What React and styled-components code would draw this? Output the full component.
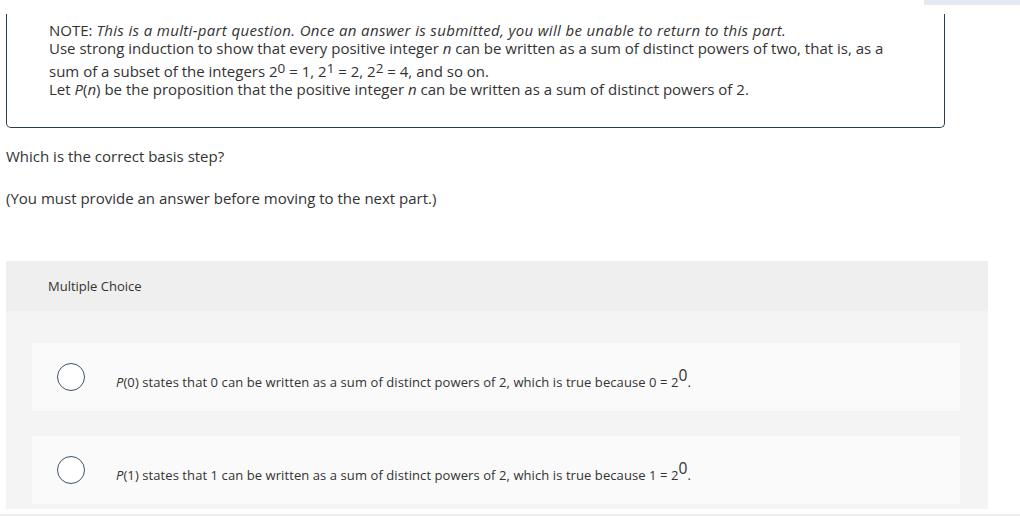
import styled, { createGlobalStyle } from "styled-components";

const GlobalStyle = createGlobalStyle`
  html, body {
    margin: 0;
    padding: 0;
    background: #ffffff;
  }
  body {
    font-family: "Open Sans", "Liberation Sans", Arial, sans-serif;
    color: #333333;
  }
`;

const Page = styled.div`
  width: 1020px;
  height: 516px;
  overflow: hidden;
  border-bottom: 2px solid #eeeeee;
  box-sizing: border-box;
`;

const TopStrip = styled.div`
  display: flex;
  justify-content: flex-end;
  height: 5px;
`;

const Tab = styled.div`
  width: 96px;
  height: 5px;
  background: #e4eaf2;
`;

const NoteCard = styled.div`
  margin: 9px 0 0 6px;
  width: 939px;
  box-sizing: border-box;
  border: 1.5px solid #2c3e4c;
  border-top: none;
  border-radius: 0 0 5px 5px;
  padding: 7px 0 29px 42px;
  font-size: 15px;
  line-height: 18px;
`;

const Line = styled.div`
  line-height: 18px;
  margin-top: ${p => (p.tall ? "5px" : "0")};
  white-space: nowrap;
`;

const Em = styled.i`
  letter-spacing: 0.35px;
`;

const Sup = styled.span`
  display: inline-block;
  line-height: 1;
  font-size: ${p => p.size || "1em"};
  vertical-align: ${p => p.lift || "4px"};
`;

const Question = styled.p`
  margin: ${p => p.top}px 0 0 6px;
  font-size: 15px;
  line-height: 18px;
`;

const ChoicePanel = styled.section`
  margin: 54px 0 0 6px;
  width: 982px;
  background: #f4f4f4;
  padding-bottom: 5px;
`;

const PanelHeader = styled.div`
  height: 50px;
  display: flex;
  align-items: center;
  padding-left: 42px;
  background: #efefef;
  font-size: 13px;
`;

const Options = styled.div`
  display: flex;
  flex-direction: column;
  gap: 25px;
  padding: 32px 28px 0 26px;
`;

const Option = styled.label`
  height: 68px;
  display: flex;
  align-items: center;
  background: #fafafa;
  padding-left: 25px;
  font-size: 13px;
  letter-spacing: 0.08px;
`;

const Radio = styled.span`
  width: 28px;
  height: 28px;
  box-sizing: border-box;
  border-radius: 50%;
  border: 1.5px solid #3b5266;
  background: #ffffff;
  flex-shrink: 0;
  margin-right: 31px;
`;

const OptionText = styled.span`
  padding-top: 4px;
`;

const choices = [
  { n: "0", lhs: "0 = 2" },
  { n: "1", lhs: "1 = 2" },
];

export default function App() {
  return (
    <>
      <GlobalStyle />
      <Page>
        <TopStrip>
          <Tab />
        </TopStrip>
        <NoteCard>
          <Line>
            NOTE: <Em>This is a multi-part question. Once an answer is submitted, you will be unable to return to this part.</Em>
          </Line>
          <Line>
            Use strong induction to show that every positive integer <i>n</i> can be written as a sum of distinct powers of two, that is, as a
          </Line>
          <Line tall>
            sum of a subset of the integers 2<Sup size="0.9em">0</Sup> = 1, 2<Sup size="0.9em">1</Sup> = 2, 2<Sup size="0.9em">2</Sup> = 4, and so on.
          </Line>
          <Line>
            Let <i>P</i>(<i>n</i>) be the proposition that the positive integer <i>n</i> can be written as a sum of distinct powers of 2.
          </Line>
        </NoteCard>
        <Question top={19}>Which is the correct basis step?</Question>
        <Question top={24}>(You must provide an answer before moving to the next part.)</Question>
        <ChoicePanel>
          <PanelHeader>Multiple Choice</PanelHeader>
          <Options>
            {choices.map(c => (
              <Option key={c.n}>
                <Radio />
                <OptionText>
                  <i>P</i>({c.n}) states that {c.n} can be written as a sum of distinct powers of 2, which is true because {c.lhs}
                  <Sup size="1.2em" lift="6px">0</Sup>.
                </OptionText>
              </Option>
            ))}
          </Options>
        </ChoicePanel>
      </Page>
    </>
  );
}
